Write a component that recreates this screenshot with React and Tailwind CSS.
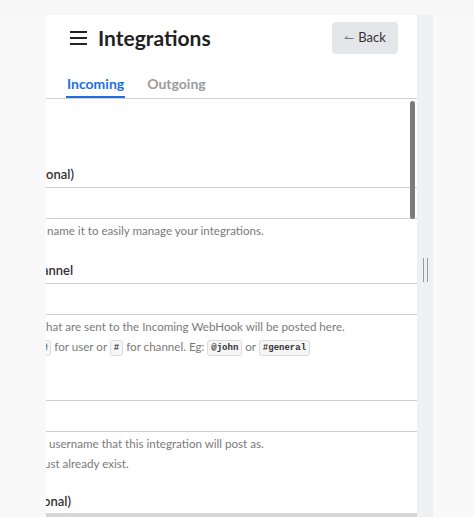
import React from "react";

function Code({ children, className = "" }) {
  return (
    <span
      className={`inline-block px-[3px] leading-[14px] text-[9px] font-bold font-['Liberation_Mono',monospace] text-[#333] bg-[#f6f6f6] border border-[#dcdcdc] rounded-[3px] align-middle ${className}`}
    >
      {children}
    </span>
  );
}

function Field({ label, labelShift = "", className = "", children }) {
  return (
    <div className={`mb-[19px] ${className}`}>
      <div className={`h-5 leading-5 text-[13px] font-semibold text-[#333] whitespace-nowrap ${labelShift}`}>
        {label}
      </div>
      <div className="mt-[3px] h-8 border-y border-[#cfcfcf] bg-white" />
      <div className="mt-[2px] text-[11.6px] leading-5 text-[#7a7a7a] whitespace-nowrap">
        {children}
      </div>
    </div>
  );
}

export default function App() {
  return (
    <div className="min-h-screen bg-[#f7f7f7] pt-[15px] flex font-['Lato',sans-serif]">
      <div className="w-[46px] shrink-0 bg-[#f8f8f8]" />

      {/* panel */}
      <div className="w-[371px] h-[502px] shrink-0 bg-white flex flex-col overflow-hidden">
        <div className="px-6 pt-[7px] flex items-center justify-between">
          <div className="flex items-center gap-[10px]">
            <svg width="18" height="16" viewBox="0 0 18 16" className="text-[#222]">
              <rect x="0" y="1" width="17" height="2" fill="currentColor" />
              <rect x="0" y="7" width="17" height="2" fill="currentColor" />
              <rect x="0" y="13" width="17" height="2" fill="currentColor" />
            </svg>
            <h1 className="text-[21px] font-bold text-[#222] leading-8">Integrations</h1>
          </div>
          <button className="h-8 w-[66px] mr-[-5px] rounded-[4px] bg-[#e4e6e9] text-[13px] text-[#333] flex items-center justify-center gap-1">
            <span className="text-[#777] text-[12px] font-['DejaVu_Sans',sans-serif]">↼</span>
            <span>Back</span>
          </button>
        </div>

        <div className="mt-5 pl-5 flex gap-[22px] border-b border-[#d2d2d2]">
          <div className="h-6 leading-5 text-[14px] font-bold text-[#1d6fe0] border-b-2 border-[#1d6fe0] px-px">
            Incoming
          </div>
          <div className="h-6 leading-5 text-[14px] font-bold text-[#9b9b9b]">Outgoing</div>
        </div>

        <div className="relative flex-1 overflow-hidden pt-[65px]">
          <Field label="onal)">
            <span className="ml-px">name it to easily manage your integrations.</span>
          </Field>

          <Field label="annel" labelShift="-ml-[4px]">
            <div>hat are sent to the Incoming WebHook will be posted here.</div>
            <div>
              <Code className="-ml-[8px]">@</Code> for user or <Code>#</Code> for channel. Eg:{" "}
              <Code>@john</Code> or <Code>#general</Code>
            </div>
          </Field>

          <Field label="" className="pt-px">
            <div className="ml-[3px]">username that this integration will post as.</div>
            <div className="-ml-[2px]">ust already exist.</div>
          </Field>

          <div className="h-5 leading-5 text-[13px] font-semibold text-[#333] -ml-[3px] -mt-[2px]">onal)</div>

          <div className="absolute right-[2px] top-[2px] w-[5px] h-[118px] rounded-full bg-[#7b7b7b]" />
        </div>
        <div className="h-1 bg-[#d6d6d6]" />
      </div>

      {/* splitter */}
      <div className="w-4 shrink-0 bg-[#eff0f2] flex justify-center pt-[243px]">
        <div className="h-6 w-[5px] border-x border-[#9a9a9a]" />
      </div>
      <div className="flex-1 bg-[#f9f9f9]" />
    </div>
  );
}
